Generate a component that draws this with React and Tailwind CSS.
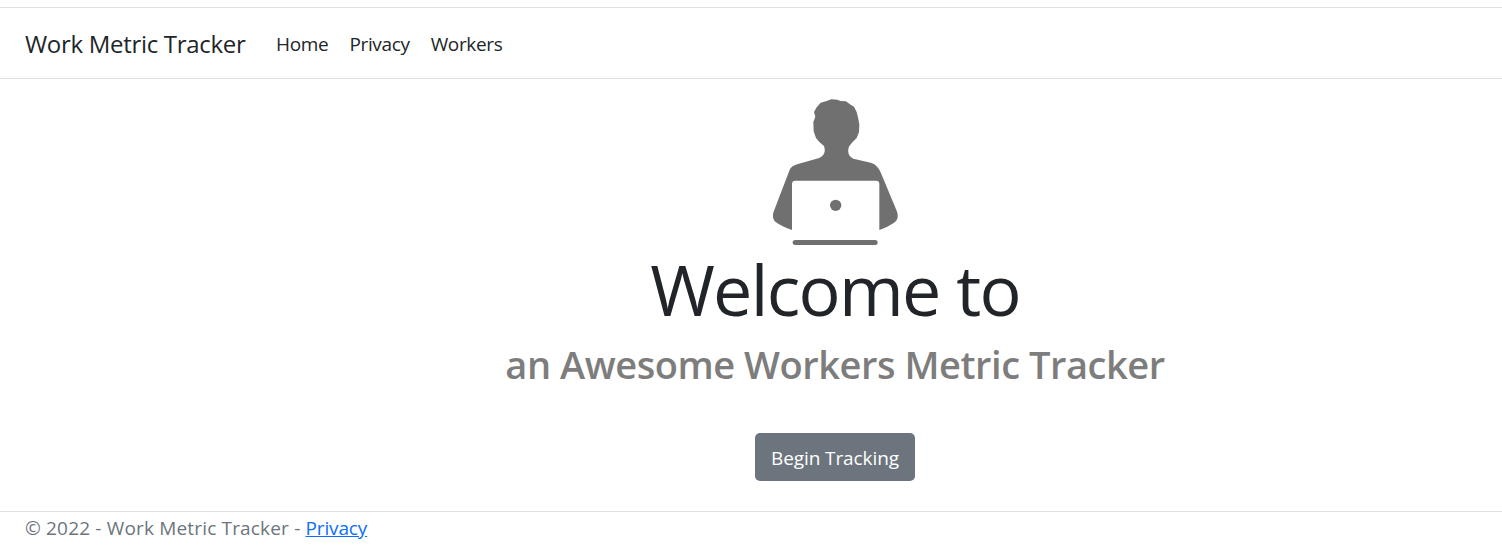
const font = "font-['Open_Sans','Liberation_Sans',sans-serif]";

const WorkerIcon = () => (
    <svg width="170" height="165" viewBox="0 0 510 495" className="block">
        <path
            fill="#707070"
            d="M212 38 L230 33 L244 28 L262 29 L272 33 L288 34 L302 44 L312 50 L320 66 L325 86 L328 104 L327 126 L320 144 L308 156 L298 168 C292 182 293 198 310 206 L362 218 C378 222 388 236 394 252 L440 362 C446 378 444 390 432 398 C420 406 404 414 388 420 L126 420 C110 414 92 406 80 398 C68 390 66 376 72 362 L118 242 C122 230 132 226 144 222 L205 205 C222 198 228 186 222 168 L208 156 L198 144 L191 124 L190 96 L196 80 L192 66 L200 52 Z"
        />
        <path fill="#ffffff" d="M126 282 Q126 272 136 272 L378 272 Q388 272 388 282 L388 420 Q388 434 374 434 L140 434 Q126 434 126 420 Z" />
        <circle cx="257" cy="346" r="17" fill="#707070" />
        <rect x="128" y="450" width="255" height="15" rx="7.5" fill="#707070" />
    </svg>
);

const App = () => {
    return (
        <div className={`${font} h-[552px] bg-white text-[#212529] overflow-hidden`}>
            <nav className="mt-[7px] h-[72px] border-y border-[#dee2e6] px-[25px] pt-[1px] flex items-center">
                <a className="text-[24px] text-[#212529] tracking-[-0.3px] mr-[20px]">Work Metric Tracker</a>
                <div className="flex text-[19px] leading-[28px] tracking-[-0.34px] text-[#212529] pt-[1px]">
                    <a className="px-[10.5px]">Home</a>
                    <a className="px-[10.5px]">Privacy</a>
                    <a className="px-[10.5px]">Workers</a>
                </div>
            </nav>
            <main className="h-[432px] pl-[168px] flex flex-col items-center">
                <div className="mt-[11px]">
                    <WorkerIcon />
                </div>
                <h1 className="text-[70px] leading-[86px] font-normal tracking-[-1.7px] -mt-[9px]">Welcome to</h1>
                <h2 className="text-[38px] leading-[46px] font-semibold text-[#7d7d7d] tracking-[-0.45px] mt-[9px]">an Awesome Workers Metric Tracker</h2>
                <button className="mt-[46px] w-[160px] h-[48px] pt-[2px] bg-[#6c757d] rounded-[5px] text-white text-[19px] tracking-[-0.1px]">Begin Tracking</button>
            </main>
            <footer className="border-t border-[#dee2e6] px-[25px] text-[19px] leading-[32px] text-[#6c757d] tracking-[0.17px]">
                © 2022 - Work Metric Tracker - <a className="text-[#0d6efd] underline tracking-[-0.15px]">Privacy</a>
            </footer>
        </div>
    );
};

export default App;
